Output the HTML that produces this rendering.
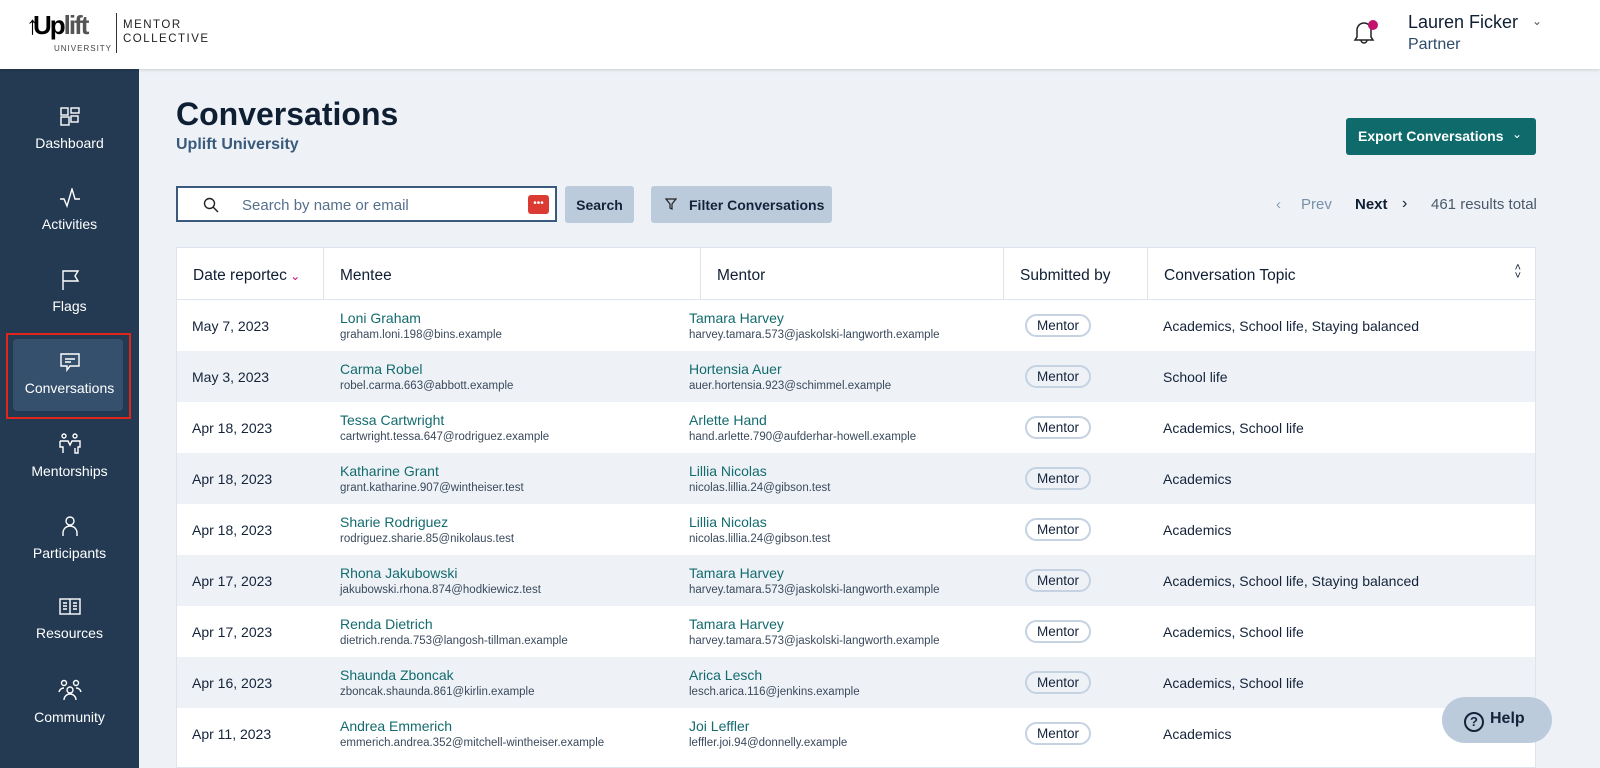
<!DOCTYPE html>
<html><head><meta charset="utf-8"><style>
*{box-sizing:border-box;margin:0;padding:0}
body{width:1600px;height:768px;overflow:hidden;background:#eef2f7;font-family:"Liberation Sans",sans-serif;color:#14233a;position:relative}
.top{position:absolute;left:0;top:0;width:1600px;height:69px;background:#fff;box-shadow:0 1px 3px rgba(0,0,0,.15);z-index:2}
.side{position:absolute;left:0;top:69px;width:139px;height:699px;background:#233a52}
.nav{position:absolute;left:0;width:139px;text-align:center;color:#fff;font-size:14px}
.nav svg{display:block;margin:0 auto 8px}
.active{position:absolute;left:13px;top:339px;width:110px;height:72px;background:#34506c;border-radius:4px}
.redbox{position:absolute;left:6px;top:333px;width:125px;height:86px;border:2px solid #e0261b}
h1{position:absolute;left:176px;top:96px;font-size:32px;font-weight:bold;color:#0f1f33}
.sub{position:absolute;left:176px;top:136px;font-size:16px;font-weight:bold;color:#3a5a7c}
.export{position:absolute;left:1346px;top:118px;width:190px;height:37px;background:#0f6a6c;border-radius:3px;color:#fff;font-weight:bold;font-size:14px;padding:10px 0 0 12px}
.search{position:absolute;left:176px;top:186px;width:381px;height:36px;border:2px solid #3a5a7c;background:#fff}
.btn{position:absolute;top:186px;height:37px;background:#bccbdc;border-radius:3px;font-size:14px;font-weight:bold;color:#14233a;padding-top:11px}
.table{position:absolute;left:176px;top:247px;width:1360px;height:521px;background:#fff;border:1px solid #dde4ee}
.row{position:absolute;left:0;width:1358px;height:51px;font-size:14px}
.row.alt{background:#eef2f7}
.c{position:absolute}
.nm{color:#136b6e;font-size:14px}
.em{color:#3a4a5c;font-size:11.5px;margin-top:3px}
.pill{position:absolute;left:848px;top:14px;width:66px;height:23px;border:2px solid #c4d2e2;border-radius:12px;text-align:center;font-size:13.5px;padding-top:2px}
.hd{position:absolute;top:0;height:52px;border-right:1px solid #dde4ee;font-size:15.5px;padding:19px 0 0 16px;color:#0f1f33}
</style></head><body>
<div class="top">
 <div style="position:absolute;left:26px;top:10px;font-size:26px;font-weight:bold;letter-spacing:-2px;color:#000">↑<span style="margin-left:-4px">Up</span><span style="color:#555">lift</span></div>
 <div style="position:absolute;left:54px;top:44px;font-size:8px;color:#444;letter-spacing:1px">UNIVERSITY</div>
 <div style="position:absolute;left:116px;top:13px;width:1px;height:40px;background:#333"></div>
 <div style="position:absolute;left:123px;top:18px;font-size:11.5px;letter-spacing:1.5px;line-height:14px;color:#222">MENTOR<br>COLLECTIVE</div>
 <svg style="position:absolute;left:1350px;top:18px" width="30" height="28" viewBox="0 0 30 28"><path d="M5 22h18l-2-3v-7a7 7 0 0 0-14 0v7z M11 22a3 3 0 0 0 6 0" fill="none" stroke="#222" stroke-width="1.5"/><circle cx="23" cy="7" r="5" fill="#c2126b"/></svg>
 <div style="position:absolute;left:1408px;top:12px;font-size:18px;color:#0f1f33">Lauren Ficker</div>
 <div style="position:absolute;left:1408px;top:36px;font-size:16px;color:#2d4a6a">Partner</div>
 <div style="position:absolute;left:1532px;top:14px;font-size:12px;color:#555">⌄</div>
</div>
<div class="side"></div>
<div class="active"></div><div class="redbox"></div>
<div class="nav" style="top:107px"><svg width="22" height="20" viewBox="0 0 22 20" fill="none" stroke="#fff" stroke-width="1.4"><rect x="2" y="1" width="7" height="7"/><rect x="12" y="1" width="8" height="5"/><rect x="2" y="10" width="8" height="8"/><rect x="12" y="9" width="7" height="6"/></svg>Dashboard</div>
<div class="nav" style="top:188px"><svg width="22" height="20" viewBox="0 0 22 20" fill="none" stroke="#fff" stroke-width="1.4"><path d="M1 11h4l3 7 5-17 3 10h5"/></svg>Activities</div>
<div class="nav" style="top:270px"><svg width="22" height="20" viewBox="0 0 22 20" fill="none" stroke="#fff" stroke-width="1.4"><path d="M4 20V1h15l-3 5 3 5H4"/></svg>Flags</div>
<div class="nav" style="top:352px"><svg width="22" height="20" viewBox="0 0 22 20" fill="none" stroke="#fff" stroke-width="1.4"><path d="M2 2h18v12h-9l-3 4v-4H2z M6 7h10M6 10h6"/></svg>Conversations</div>
<div class="nav" style="top:433px"><svg width="24" height="22" viewBox="0 0 24 22" fill="none" stroke="#fff" stroke-width="1.4"><circle cx="6" cy="3" r="2"/><circle cx="17" cy="3" r="2"/><path d="M2 8h8l2 4 2-4h8v6h-2v6h-3v-5M5 20v-6H2V8"/></svg>Mentorships</div>
<div class="nav" style="top:515px"><svg width="22" height="22" viewBox="0 0 22 22" fill="none" stroke="#fff" stroke-width="1.4"><circle cx="11" cy="6" r="4"/><path d="M4 21v-3a7 7 0 0 1 14 0v3"/></svg>Participants</div>
<div class="nav" style="top:597px"><svg width="22" height="20" viewBox="0 0 22 20" fill="none" stroke="#fff" stroke-width="1.4"><rect x="1" y="2" width="20" height="15"/><path d="M11 2v15M4 6h4M4 9h4M4 12h4M14 6h4M14 9h4M14 12h4"/></svg>Resources</div>
<div class="nav" style="top:679px"><svg width="24" height="22" viewBox="0 0 24 22" fill="none" stroke="#fff" stroke-width="1.4"><circle cx="6" cy="4" r="2.5"/><circle cx="18" cy="4" r="2.5"/><circle cx="12" cy="11" r="3"/><path d="M1 13a5 5 0 0 1 5-4M23 13a5 5 0 0 0-5-4M6 21a6 6 0 0 1 12 0"/></svg>Community</div>

<h1>Conversations</h1>
<div class="sub">Uplift University</div>
<div class="export">Export Conversations <span style="position:absolute;right:14px;top:9px;font-weight:normal;font-size:12px">⌄</span></div>
<div class="search">
 <svg style="position:absolute;left:25px;top:9px" width="16" height="16" viewBox="0 0 16 16" fill="none" stroke="#222" stroke-width="1.4"><circle cx="6.5" cy="6.5" r="5"/><path d="M10 10l5 5"/></svg>
 <div style="position:absolute;left:64px;top:9px;font-size:15px;color:#56708c">Search by name or email</div>
 <div style="position:absolute;left:350px;top:7px;width:21px;height:19px;background:#db3b32;border-radius:3px;color:#fff;font-size:10px;text-align:center;line-height:17px">•••</div>
</div>
<div class="btn" style="left:565px;width:69px;text-align:center">Search</div>
<div class="btn" style="left:651px;width:181px;padding-left:38px"><svg style="position:absolute;left:14px;top:12px" width="12" height="12" viewBox="0 0 12 12" fill="none" stroke="#222" stroke-width="1.2"><path d="M1 1h10L7 6v5L5 10V6z"/></svg>Filter Conversations</div>
<div style="position:absolute;top:196px;left:1276px;font-size:15px;color:#8a9db2">‹</div>
<div style="position:absolute;top:196px;left:1301px;font-size:15px;color:#7a90a8">Prev</div>
<div style="position:absolute;top:196px;left:1355px;font-size:15px;font-weight:bold;color:#0f1f33">Next</div>
<div style="position:absolute;top:195px;left:1402px;font-size:16px;color:#0f1f33">›</div>
<div style="position:absolute;top:196px;left:1431px;font-size:15px;color:#4a5a6c">461 results total</div>

<div class="table">
 <div class="hd" style="left:0;width:147px">Date reportec<span style="color:#c2126b;font-size:12px"> ⌄</span></div>
 <div class="hd" style="left:147px;width:377px">Mentee</div>
 <div class="hd" style="left:524px;width:303px">Mentor</div>
 <div class="hd" style="left:827px;width:144px">Submitted by</div>
 <div class="hd" style="left:971px;width:387px;border:0">Conversation Topic<span style="position:absolute;right:14px;top:16px;font-size:11px;line-height:8px">˄<br>˅</span></div>
 <div style="position:absolute;left:0;top:51px;width:1358px;height:1px;background:#dde4ee"></div>
 <div id="rows"></div>
</div>
<div style="position:absolute;left:1442px;top:697px;width:110px;height:46px;background:#bccbdc;border-radius:23px;font-weight:bold;font-size:16px;padding:13px 0 0 22px"><span style="display:inline-block;width:20px;height:20px;border:2px solid #14233a;border-radius:50%;text-align:center;font-size:13px;line-height:16px;margin-right:6px;vertical-align:-3px">?</span>Help</div>
<script>
var d=[["May 7, 2023","Loni Graham","graham.loni.198@bins.example","Tamara Harvey","harvey.tamara.573@jaskolski-langworth.example","Academics, School life, Staying balanced"],
["May 3, 2023","Carma Robel","robel.carma.663@abbott.example","Hortensia Auer","auer.hortensia.923@schimmel.example","School life"],
["Apr 18, 2023","Tessa Cartwright","cartwright.tessa.647@rodriguez.example","Arlette Hand","hand.arlette.790@aufderhar-howell.example","Academics, School life"],
["Apr 18, 2023","Katharine Grant","grant.katharine.907@wintheiser.test","Lillia Nicolas","nicolas.lillia.24@gibson.test","Academics"],
["Apr 18, 2023","Sharie Rodriguez","rodriguez.sharie.85@nikolaus.test","Lillia Nicolas","nicolas.lillia.24@gibson.test","Academics"],
["Apr 17, 2023","Rhona Jakubowski","jakubowski.rhona.874@hodkiewicz.test","Tamara Harvey","harvey.tamara.573@jaskolski-langworth.example","Academics, School life, Staying balanced"],
["Apr 17, 2023","Renda Dietrich","dietrich.renda.753@langosh-tillman.example","Tamara Harvey","harvey.tamara.573@jaskolski-langworth.example","Academics, School life"],
["Apr 16, 2023","Shaunda Zboncak","zboncak.shaunda.861@kirlin.example","Arica Lesch","lesch.arica.116@jenkins.example","Academics, School life"],
["Apr 11, 2023","Andrea Emmerich","emmerich.andrea.352@mitchell-wintheiser.example","Joi Leffler","leffler.joi.94@donnelly.example","Academics"]];
var h="";d.forEach(function(r,i){h+='<div class="row'+(i%2?' alt':'')+'" style="top:'+(52+i*51)+'px"><div class="c" style="left:15px;top:18px">'+r[0]+'</div><div class="c" style="left:163px;top:10px"><div class="nm">'+r[1]+'</div><div class="em">'+r[2]+'</div></div><div class="c" style="left:512px;top:10px"><div class="nm">'+r[3]+'</div><div class="em">'+r[4]+'</div></div><div class="pill">Mentor</div><div class="c" style="left:986px;top:18px">'+r[5]+'</div></div>';});
document.getElementById("rows").innerHTML=h;
</script>
</body></html>
